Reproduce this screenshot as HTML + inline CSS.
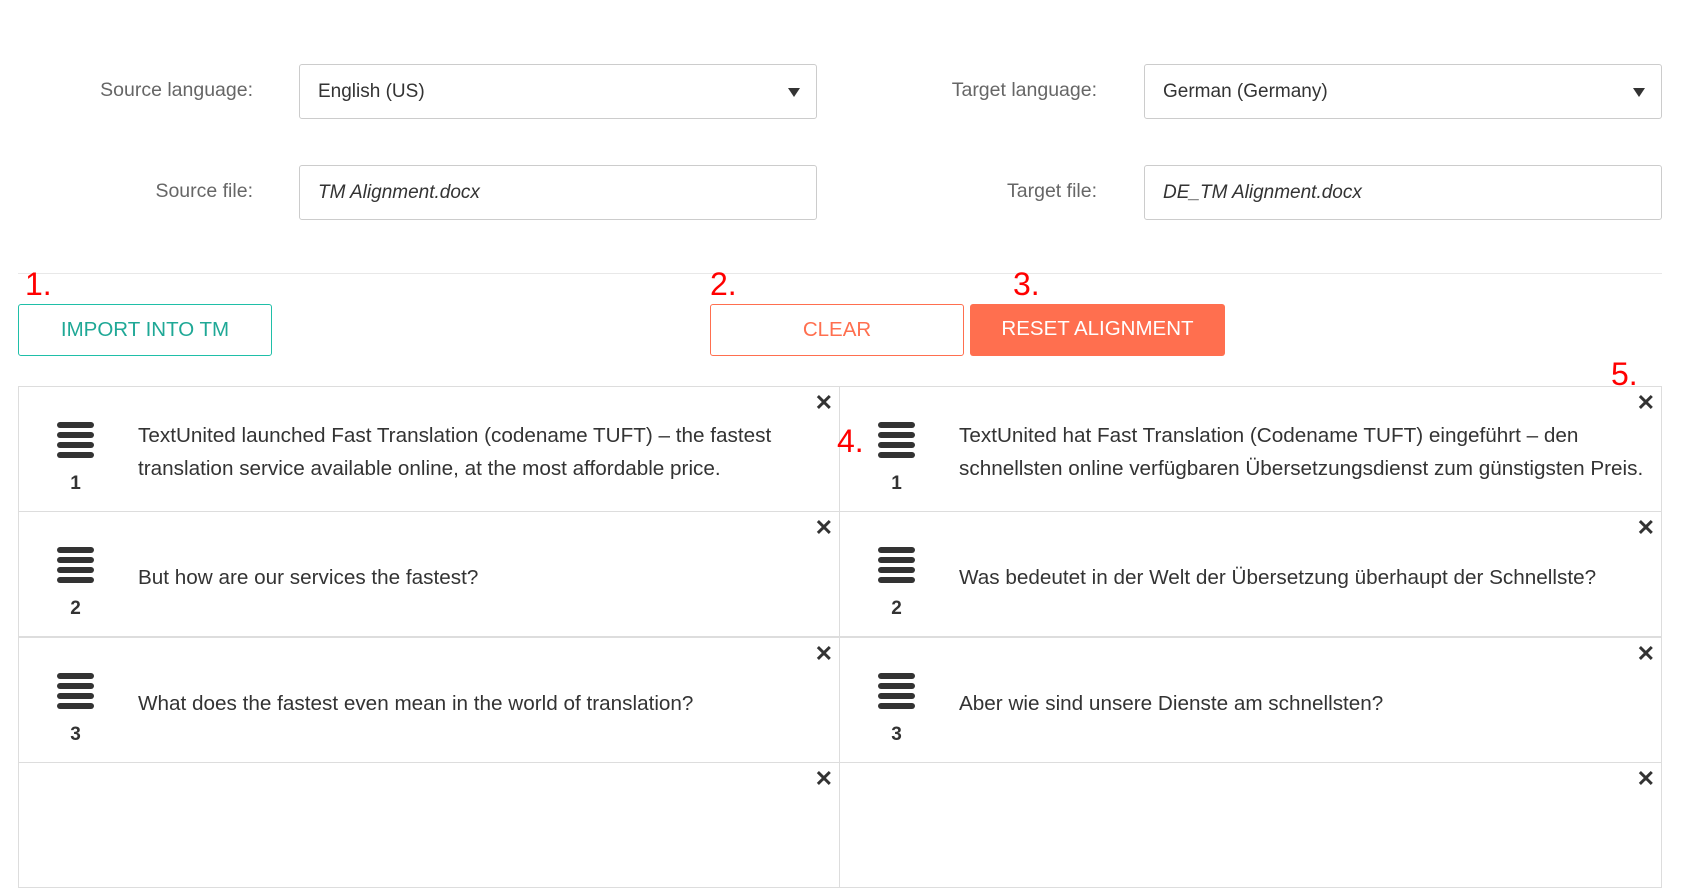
<!DOCTYPE html>
<html><head><meta charset="utf-8"><style>
*{box-sizing:border-box;margin:0;padding:0}
body{width:1681px;height:791px;overflow:hidden;background:#fff;font-family:"Liberation Sans",sans-serif;color:#333;position:relative}
.a{position:absolute}
.lbl{font-size:19.5px;color:#666;text-align:right;width:260px;line-height:20px}
.box{border:1px solid #ccc;border-radius:3px;height:55px;font-size:19px;line-height:53px;padding-left:18px;color:#333}
.it{font-style:italic}
.arr{position:absolute;right:16px;top:23px;width:0;height:0;border-left:6px solid transparent;border-right:6px solid transparent;border-top:9px solid #333}
.red{color:#f00;font-size:32px;line-height:32px}
.btn{height:52px;border-radius:3px;font-size:20.5px;line-height:50px;text-align:center}
.cell{position:absolute;border:1px solid #ddd;height:126px}
.ham{position:absolute;left:38px;top:35px;width:37px}
.ham i{display:block;height:6px;border-radius:3px;background:#333;margin-bottom:4px}
.num{position:absolute;left:38px;width:37px;text-align:center;top:86px;font-size:19px;font-weight:bold}
.txt{position:absolute;left:119px;font-size:20.7px;line-height:33px;top:3px;height:124px;display:flex;align-items:center}
.x{position:absolute;right:6px;top:4px;font-size:22px;font-weight:bold;line-height:24px}
</style></head><body>
<div class="a lbl" style="left:-7px;top:80px">Source language:</div>
<div class="a box" style="left:299px;top:64px;width:518px">English (US)<span class="arr"></span></div>
<div class="a lbl" style="left:837px;top:80px">Target language:</div>
<div class="a box" style="left:1144px;top:64px;width:518px">German (Germany)<span class="arr"></span></div>
<div class="a lbl" style="left:-7px;top:181px">Source file:</div>
<div class="a box it" style="left:299px;top:165px;width:518px">TM Alignment.docx</div>
<div class="a lbl" style="left:837px;top:181px">Target file:</div>
<div class="a box it" style="left:1144px;top:165px;width:518px">DE_TM Alignment.docx</div>
<div class="a" style="left:18px;top:273px;width:1644px;height:1px;background:#e8e8e8"></div>
<div class="a red" style="left:25px;top:268px">1.</div>
<div class="a red" style="left:710px;top:268px">2.</div>
<div class="a red" style="left:1013px;top:268px">3.</div>
<div class="a red" style="left:1611px;top:358px">5.</div>
<div class="a btn" style="left:18px;top:304px;width:254px;border:1px solid #1fbfa8;color:#1fa896">IMPORT INTO TM</div>
<div class="a btn" style="left:710px;top:304px;width:254px;border:1px solid #ff6f4f;color:#ff6f4f">CLEAR</div>
<div class="a btn" style="left:970px;top:304px;width:255px;background:#ff6f4f;color:#fff">RESET ALIGNMENT</div>

<div class="cell" style="left:18px;top:386px;width:822px"><div class="ham"><i></i><i></i><i></i><i></i></div><div class="num">1</div><div class="txt">TextUnited launched Fast Translation (codename TUFT) – the fastest<br>translation service available online, at the most affordable price.</div><div class="x">✕</div></div>
<div class="cell" style="left:839px;top:386px;width:823px"><div class="ham"><i></i><i></i><i></i><i></i></div><div class="num">1</div><div class="txt">TextUnited hat Fast Translation (Codename TUFT) eingeführt – den<br>schnellsten online verfügbaren Übersetzungsdienst zum günstigsten Preis.</div><div class="x">✕</div></div>
<div class="cell" style="left:18px;top:511px;width:822px"><div class="ham"><i></i><i></i><i></i><i></i></div><div class="num">2</div><div class="txt">But how are our services the fastest?</div><div class="x">✕</div></div>
<div class="cell" style="left:839px;top:511px;width:823px"><div class="ham"><i></i><i></i><i></i><i></i></div><div class="num">2</div><div class="txt">Was bedeutet in der Welt der Übersetzung überhaupt der Schnellste?</div><div class="x">✕</div></div>
<div class="cell" style="left:18px;top:637px;width:822px"><div class="ham"><i></i><i></i><i></i><i></i></div><div class="num">3</div><div class="txt">What does the fastest even mean in the world of translation?</div><div class="x">✕</div></div>
<div class="cell" style="left:839px;top:637px;width:823px"><div class="ham"><i></i><i></i><i></i><i></i></div><div class="num">3</div><div class="txt">Aber wie sind unsere Dienste am schnellsten?</div><div class="x">✕</div></div>
<div class="cell" style="left:18px;top:762px;width:822px"><div class="x">✕</div></div>
<div class="cell" style="left:839px;top:762px;width:823px"><div class="x">✕</div></div>
<div class="a red" style="left:837px;top:425px">4.</div>
</body></html>
